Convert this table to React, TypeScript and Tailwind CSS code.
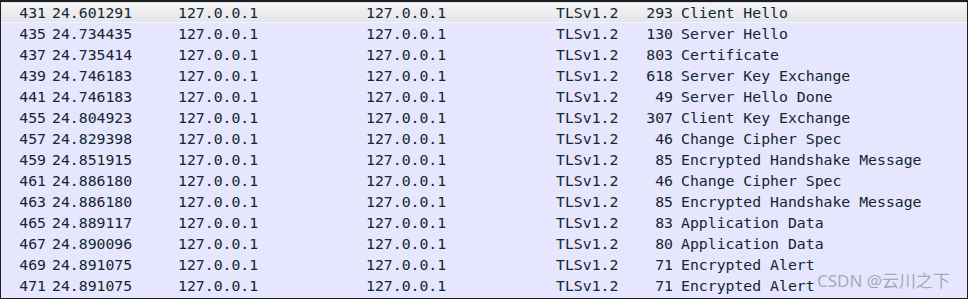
import React from "react"

type Packet = {
  no: number
  time: string
  src: string
  dst: string
  proto: string
  len: number
  info: string
}

const packets: Packet[] = [
  { no: 431, time: "24.601291", src: "127.0.0.1", dst: "127.0.0.1", proto: "TLSv1.2", len: 293, info: "Client Hello" },
  { no: 435, time: "24.734435", src: "127.0.0.1", dst: "127.0.0.1", proto: "TLSv1.2", len: 130, info: "Server Hello" },
  { no: 437, time: "24.735414", src: "127.0.0.1", dst: "127.0.0.1", proto: "TLSv1.2", len: 803, info: "Certificate" },
  { no: 439, time: "24.746183", src: "127.0.0.1", dst: "127.0.0.1", proto: "TLSv1.2", len: 618, info: "Server Key Exchange" },
  { no: 441, time: "24.746183", src: "127.0.0.1", dst: "127.0.0.1", proto: "TLSv1.2", len: 49, info: "Server Hello Done" },
  { no: 455, time: "24.804923", src: "127.0.0.1", dst: "127.0.0.1", proto: "TLSv1.2", len: 307, info: "Client Key Exchange" },
  { no: 457, time: "24.829398", src: "127.0.0.1", dst: "127.0.0.1", proto: "TLSv1.2", len: 46, info: "Change Cipher Spec" },
  { no: 459, time: "24.851915", src: "127.0.0.1", dst: "127.0.0.1", proto: "TLSv1.2", len: 85, info: "Encrypted Handshake Message" },
  { no: 461, time: "24.886180", src: "127.0.0.1", dst: "127.0.0.1", proto: "TLSv1.2", len: 46, info: "Change Cipher Spec" },
  { no: 463, time: "24.886180", src: "127.0.0.1", dst: "127.0.0.1", proto: "TLSv1.2", len: 85, info: "Encrypted Handshake Message" },
  { no: 465, time: "24.889117", src: "127.0.0.1", dst: "127.0.0.1", proto: "TLSv1.2", len: 83, info: "Application Data" },
  { no: 467, time: "24.890096", src: "127.0.0.1", dst: "127.0.0.1", proto: "TLSv1.2", len: 80, info: "Application Data" },
  { no: 469, time: "24.891075", src: "127.0.0.1", dst: "127.0.0.1", proto: "TLSv1.2", len: 71, info: "Encrypted Alert" },
  { no: 471, time: "24.891075", src: "127.0.0.1", dst: "127.0.0.1", proto: "TLSv1.2", len: 71, info: "Encrypted Alert" },
]

const Row: React.FC<{ p: Packet; selected?: boolean }> = ({ p, selected }) => (
  <div
    className={
      selected
        ? "flex h-[21px] items-center pt-[1px] border-t border-b border-t-[#dcdcf4] border-b-[#f4f4f8] bg-gradient-to-b from-[#f4f4f6] to-[#e6e6ea] whitespace-pre"
        : "flex h-[21px] items-center pt-[1px] whitespace-pre"
    }
  >
    <span className="w-[45px] shrink-0 text-right">{p.no}</span>
    <span className="ml-[6px] w-[126px] shrink-0">{p.time}</span>
    <span className="w-[188px] shrink-0">{p.src}</span>
    <span className="w-[190px] shrink-0">{p.dst}</span>
    <span className="w-[70px] shrink-0">{p.proto}</span>
    <span className="w-[47px] shrink-0 text-right">{p.len}</span>
    <span className="ml-[8px]">{p.info}</span>
  </div>
)

export default function App() {
  return (
    <div className="w-[969px] h-[300px] bg-white">
      <div
        className="relative w-[968px] h-[299px] overflow-hidden border border-t-2 border-[#1e2018] bg-[#e7e6ff] text-[14.8px] leading-none text-[#12272e]"
        style={{ fontFamily: '"DejaVu Sans Mono", "Liberation Mono", monospace' }}
      >
        {packets.map((p, i) => (
          <Row key={p.no} p={p} selected={i === 0} />
        ))}
        <span
          className="absolute left-[816px] top-[270px] text-[17px] leading-none text-[#a9a9b4] whitespace-nowrap"
          style={{ fontFamily: '"Noto Sans", "Noto Sans CJK SC", sans-serif' }}
        >
          CSDN @云川之下
        </span>
      </div>
    </div>
  )
}
